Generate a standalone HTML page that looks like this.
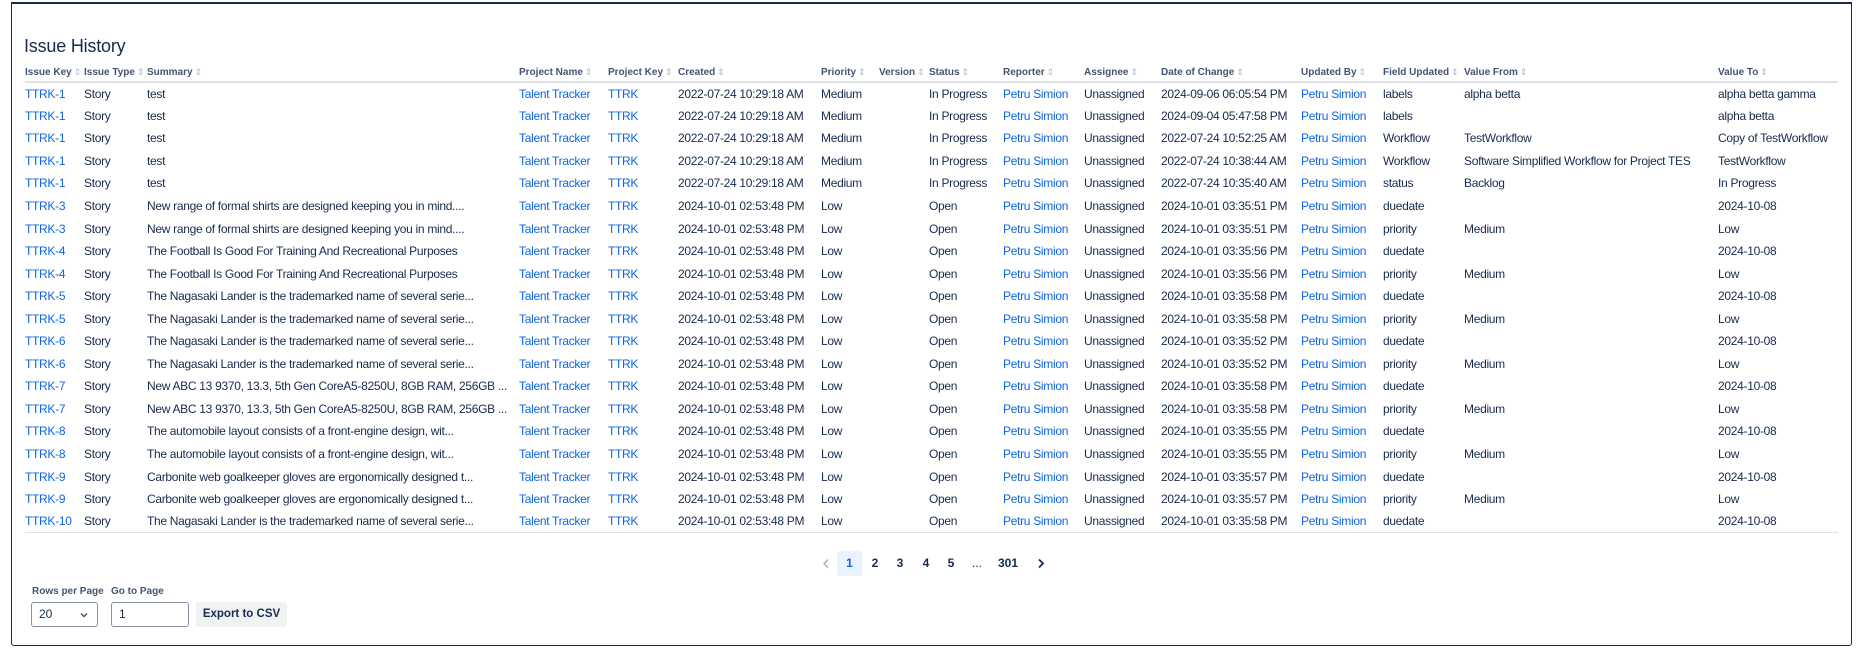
<!DOCTYPE html>
<html><head><meta charset="utf-8"><style>
*{box-sizing:border-box;margin:0;padding:0}
body{width:1866px;height:648px;background:#fff;font-family:"Liberation Sans",sans-serif;color:#172b4d;position:relative;overflow:hidden}
.frame{position:absolute;left:11px;top:2px;width:1841px;height:644px;border:1px solid #1d2a44;border-top:2px solid #1d2a44;border-radius:0 0 3px 3px}
h1{position:absolute;left:24px;top:36px;font-size:18px;font-weight:normal;color:#172b4d;letter-spacing:-0.2px}
table{position:absolute;left:25px;top:64px;width:1813px;border-collapse:collapse;table-layout:fixed}
th{font-size:10px;font-weight:bold;color:#44546f;text-align:left;height:18px;border-bottom:2px solid #dfe1e6;white-space:nowrap;overflow:hidden;vertical-align:middle}
th span{color:#b3b9c4;font-weight:normal;font-size:9px;margin-left:2px}
td{font-size:12px;letter-spacing:-0.3px;height:22.55px;white-space:nowrap;overflow:hidden;vertical-align:middle}
tr:last-child td{border-bottom:1px solid #dfe1e6}
.l{color:#0c66e4}
.pg{position:absolute;top:551px;height:25px;font-size:12px;font-weight:bold;color:#172b4d;line-height:25px;text-align:center}
.lbl{position:absolute;top:586px;font-size:10px;font-weight:bold;color:#44546f}
.box{position:absolute;top:602px;height:25px;border:1px solid #8590a2;border-radius:3px;font-size:12px;line-height:23px;padding-left:7px}
</style></head><body>
<div class="frame"></div>
<h1>Issue History</h1>
<table>
<colgroup><col style="width:59px"><col style="width:63px"><col style="width:372px"><col style="width:89px"><col style="width:70px"><col style="width:143px"><col style="width:58px"><col style="width:50px"><col style="width:74px"><col style="width:81px"><col style="width:77px"><col style="width:140px"><col style="width:82px"><col style="width:81px"><col style="width:254px"><col style="width:120px"></colgroup>
<tr><th>Issue Key<span>⇕</span></th><th>Issue Type<span>⇕</span></th><th>Summary<span>⇕</span></th><th>Project Name<span>⇕</span></th><th>Project Key<span>⇕</span></th><th>Created<span>⇕</span></th><th>Priority<span>⇕</span></th><th>Version<span>⇕</span></th><th>Status<span>⇕</span></th><th>Reporter<span>⇕</span></th><th>Assignee<span>⇕</span></th><th>Date of Change<span>⇕</span></th><th>Updated By<span>⇕</span></th><th>Field Updated<span>⇕</span></th><th>Value From<span>⇕</span></th><th>Value To<span>⇕</span></th></tr>
<tr><td class="l">TTRK-1</td><td>Story</td><td>test</td><td class="l">Talent Tracker</td><td class="l">TTRK</td><td>2022-07-24 10:29:18 AM</td><td>Medium</td><td></td><td>In Progress</td><td class="l">Petru Simion</td><td>Unassigned</td><td>2024-09-06 06:05:54 PM</td><td class="l">Petru Simion</td><td>labels</td><td>alpha betta</td><td>alpha betta gamma</td></tr>
<tr><td class="l">TTRK-1</td><td>Story</td><td>test</td><td class="l">Talent Tracker</td><td class="l">TTRK</td><td>2022-07-24 10:29:18 AM</td><td>Medium</td><td></td><td>In Progress</td><td class="l">Petru Simion</td><td>Unassigned</td><td>2024-09-04 05:47:58 PM</td><td class="l">Petru Simion</td><td>labels</td><td></td><td>alpha betta</td></tr>
<tr><td class="l">TTRK-1</td><td>Story</td><td>test</td><td class="l">Talent Tracker</td><td class="l">TTRK</td><td>2022-07-24 10:29:18 AM</td><td>Medium</td><td></td><td>In Progress</td><td class="l">Petru Simion</td><td>Unassigned</td><td>2022-07-24 10:52:25 AM</td><td class="l">Petru Simion</td><td>Workflow</td><td>TestWorkflow</td><td>Copy of TestWorkflow</td></tr>
<tr><td class="l">TTRK-1</td><td>Story</td><td>test</td><td class="l">Talent Tracker</td><td class="l">TTRK</td><td>2022-07-24 10:29:18 AM</td><td>Medium</td><td></td><td>In Progress</td><td class="l">Petru Simion</td><td>Unassigned</td><td>2022-07-24 10:38:44 AM</td><td class="l">Petru Simion</td><td>Workflow</td><td>Software Simplified Workflow for Project TES</td><td>TestWorkflow</td></tr>
<tr><td class="l">TTRK-1</td><td>Story</td><td>test</td><td class="l">Talent Tracker</td><td class="l">TTRK</td><td>2022-07-24 10:29:18 AM</td><td>Medium</td><td></td><td>In Progress</td><td class="l">Petru Simion</td><td>Unassigned</td><td>2022-07-24 10:35:40 AM</td><td class="l">Petru Simion</td><td>status</td><td>Backlog</td><td>In Progress</td></tr>
<tr><td class="l">TTRK-3</td><td>Story</td><td>New range of formal shirts are designed keeping you in mind....</td><td class="l">Talent Tracker</td><td class="l">TTRK</td><td>2024-10-01 02:53:48 PM</td><td>Low</td><td></td><td>Open</td><td class="l">Petru Simion</td><td>Unassigned</td><td>2024-10-01 03:35:51 PM</td><td class="l">Petru Simion</td><td>duedate</td><td></td><td>2024-10-08</td></tr>
<tr><td class="l">TTRK-3</td><td>Story</td><td>New range of formal shirts are designed keeping you in mind....</td><td class="l">Talent Tracker</td><td class="l">TTRK</td><td>2024-10-01 02:53:48 PM</td><td>Low</td><td></td><td>Open</td><td class="l">Petru Simion</td><td>Unassigned</td><td>2024-10-01 03:35:51 PM</td><td class="l">Petru Simion</td><td>priority</td><td>Medium</td><td>Low</td></tr>
<tr><td class="l">TTRK-4</td><td>Story</td><td>The Football Is Good For Training And Recreational Purposes</td><td class="l">Talent Tracker</td><td class="l">TTRK</td><td>2024-10-01 02:53:48 PM</td><td>Low</td><td></td><td>Open</td><td class="l">Petru Simion</td><td>Unassigned</td><td>2024-10-01 03:35:56 PM</td><td class="l">Petru Simion</td><td>duedate</td><td></td><td>2024-10-08</td></tr>
<tr><td class="l">TTRK-4</td><td>Story</td><td>The Football Is Good For Training And Recreational Purposes</td><td class="l">Talent Tracker</td><td class="l">TTRK</td><td>2024-10-01 02:53:48 PM</td><td>Low</td><td></td><td>Open</td><td class="l">Petru Simion</td><td>Unassigned</td><td>2024-10-01 03:35:56 PM</td><td class="l">Petru Simion</td><td>priority</td><td>Medium</td><td>Low</td></tr>
<tr><td class="l">TTRK-5</td><td>Story</td><td>The Nagasaki Lander is the trademarked name of several serie...</td><td class="l">Talent Tracker</td><td class="l">TTRK</td><td>2024-10-01 02:53:48 PM</td><td>Low</td><td></td><td>Open</td><td class="l">Petru Simion</td><td>Unassigned</td><td>2024-10-01 03:35:58 PM</td><td class="l">Petru Simion</td><td>duedate</td><td></td><td>2024-10-08</td></tr>
<tr><td class="l">TTRK-5</td><td>Story</td><td>The Nagasaki Lander is the trademarked name of several serie...</td><td class="l">Talent Tracker</td><td class="l">TTRK</td><td>2024-10-01 02:53:48 PM</td><td>Low</td><td></td><td>Open</td><td class="l">Petru Simion</td><td>Unassigned</td><td>2024-10-01 03:35:58 PM</td><td class="l">Petru Simion</td><td>priority</td><td>Medium</td><td>Low</td></tr>
<tr><td class="l">TTRK-6</td><td>Story</td><td>The Nagasaki Lander is the trademarked name of several serie...</td><td class="l">Talent Tracker</td><td class="l">TTRK</td><td>2024-10-01 02:53:48 PM</td><td>Low</td><td></td><td>Open</td><td class="l">Petru Simion</td><td>Unassigned</td><td>2024-10-01 03:35:52 PM</td><td class="l">Petru Simion</td><td>duedate</td><td></td><td>2024-10-08</td></tr>
<tr><td class="l">TTRK-6</td><td>Story</td><td>The Nagasaki Lander is the trademarked name of several serie...</td><td class="l">Talent Tracker</td><td class="l">TTRK</td><td>2024-10-01 02:53:48 PM</td><td>Low</td><td></td><td>Open</td><td class="l">Petru Simion</td><td>Unassigned</td><td>2024-10-01 03:35:52 PM</td><td class="l">Petru Simion</td><td>priority</td><td>Medium</td><td>Low</td></tr>
<tr><td class="l">TTRK-7</td><td>Story</td><td>New ABC 13 9370, 13.3, 5th Gen CoreA5-8250U, 8GB RAM, 256GB ...</td><td class="l">Talent Tracker</td><td class="l">TTRK</td><td>2024-10-01 02:53:48 PM</td><td>Low</td><td></td><td>Open</td><td class="l">Petru Simion</td><td>Unassigned</td><td>2024-10-01 03:35:58 PM</td><td class="l">Petru Simion</td><td>duedate</td><td></td><td>2024-10-08</td></tr>
<tr><td class="l">TTRK-7</td><td>Story</td><td>New ABC 13 9370, 13.3, 5th Gen CoreA5-8250U, 8GB RAM, 256GB ...</td><td class="l">Talent Tracker</td><td class="l">TTRK</td><td>2024-10-01 02:53:48 PM</td><td>Low</td><td></td><td>Open</td><td class="l">Petru Simion</td><td>Unassigned</td><td>2024-10-01 03:35:58 PM</td><td class="l">Petru Simion</td><td>priority</td><td>Medium</td><td>Low</td></tr>
<tr><td class="l">TTRK-8</td><td>Story</td><td>The automobile layout consists of a front-engine design, wit...</td><td class="l">Talent Tracker</td><td class="l">TTRK</td><td>2024-10-01 02:53:48 PM</td><td>Low</td><td></td><td>Open</td><td class="l">Petru Simion</td><td>Unassigned</td><td>2024-10-01 03:35:55 PM</td><td class="l">Petru Simion</td><td>duedate</td><td></td><td>2024-10-08</td></tr>
<tr><td class="l">TTRK-8</td><td>Story</td><td>The automobile layout consists of a front-engine design, wit...</td><td class="l">Talent Tracker</td><td class="l">TTRK</td><td>2024-10-01 02:53:48 PM</td><td>Low</td><td></td><td>Open</td><td class="l">Petru Simion</td><td>Unassigned</td><td>2024-10-01 03:35:55 PM</td><td class="l">Petru Simion</td><td>priority</td><td>Medium</td><td>Low</td></tr>
<tr><td class="l">TTRK-9</td><td>Story</td><td>Carbonite web goalkeeper gloves are ergonomically designed t...</td><td class="l">Talent Tracker</td><td class="l">TTRK</td><td>2024-10-01 02:53:48 PM</td><td>Low</td><td></td><td>Open</td><td class="l">Petru Simion</td><td>Unassigned</td><td>2024-10-01 03:35:57 PM</td><td class="l">Petru Simion</td><td>duedate</td><td></td><td>2024-10-08</td></tr>
<tr><td class="l">TTRK-9</td><td>Story</td><td>Carbonite web goalkeeper gloves are ergonomically designed t...</td><td class="l">Talent Tracker</td><td class="l">TTRK</td><td>2024-10-01 02:53:48 PM</td><td>Low</td><td></td><td>Open</td><td class="l">Petru Simion</td><td>Unassigned</td><td>2024-10-01 03:35:57 PM</td><td class="l">Petru Simion</td><td>priority</td><td>Medium</td><td>Low</td></tr>
<tr><td class="l">TTRK-10</td><td>Story</td><td>The Nagasaki Lander is the trademarked name of several serie...</td><td class="l">Talent Tracker</td><td class="l">TTRK</td><td>2024-10-01 02:53:48 PM</td><td>Low</td><td></td><td>Open</td><td class="l">Petru Simion</td><td>Unassigned</td><td>2024-10-01 03:35:58 PM</td><td class="l">Petru Simion</td><td>duedate</td><td></td><td>2024-10-08</td></tr>
</table>

<svg style="position:absolute;left:822px;top:558px" width="8" height="11" viewBox="0 0 8 11"><path d="M6 1.5L2 5.5L6 9.5" stroke="#b3b9c4" stroke-width="1.6" fill="none"/></svg>
<div class="pg" style="left:837px;width:25px;background:#e9f2ff;color:#0c66e4;border-radius:3px">1</div>
<div class="pg" style="left:866px;width:18px">2</div>
<div class="pg" style="left:891px;width:18px">3</div>
<div class="pg" style="left:917px;width:18px">4</div>
<div class="pg" style="left:942px;width:18px">5</div>
<div class="pg" style="left:968px;width:18px;font-weight:normal">...</div>
<div class="pg" style="left:994px;width:28px">301</div>
<svg style="position:absolute;left:1037px;top:558px" width="8" height="11" viewBox="0 0 8 11"><path d="M2 1.5L6 5.5L2 9.5" stroke="#172b4d" stroke-width="1.8" fill="none"/></svg>

<div class="lbl" style="left:32px">Rows per Page</div>
<div class="lbl" style="left:111px">Go to Page</div>
<div class="box" style="left:31px;width:67px">20<svg style="position:absolute;left:48px;top:9px" width="8" height="6" viewBox="0 0 8 6"><path d="M1 1.5L4 4.5L7 1.5" stroke="#44546f" stroke-width="1.5" fill="none"/></svg></div>
<div class="box" style="left:111px;width:78px">1</div>
<div style="position:absolute;left:196px;top:602px;width:91px;height:25px;background:#f1f2f4;border-radius:3px;font-size:11.5px;font-weight:bold;line-height:25px;text-align:center;color:#172b4d">Export to CSV</div>
</body></html>
